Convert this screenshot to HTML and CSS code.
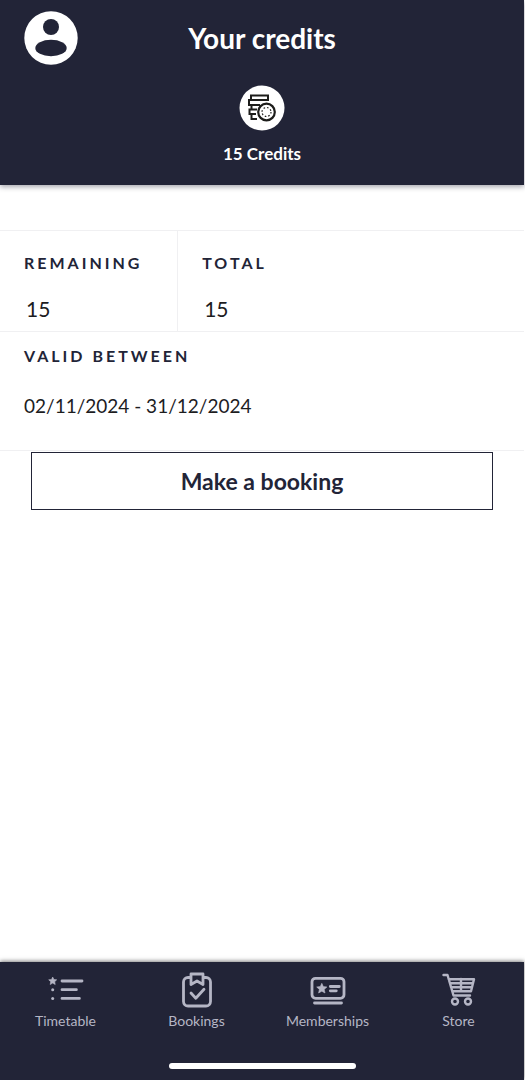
FILE: index.html
```html
<!DOCTYPE html>
<html lang="en">
<head>
<meta charset="utf-8">
<meta name="viewport" content="width=device-width, initial-scale=1">
<title>Your credits</title>
<link rel="stylesheet" href="styles.css">
</head>
<body>
<header class="header">
  <div class="header-bar">
    <button class="avatar" type="button" aria-label="Account">
      <svg viewBox="0 0 54 54" aria-hidden="true">
        <circle cx="27" cy="27" r="26.7" fill="#fff"/>
        <circle cx="27" cy="16" r="8" fill="#222437"/>
        <ellipse cx="27" cy="37" rx="15.7" ry="8.2" fill="#222437"/>
      </svg>
    </button>
    <h1 class="title">Your credits</h1>
  </div>
  <div class="summary">
    <svg class="coins" viewBox="0 0 46 46" aria-hidden="true">
      <circle cx="23" cy="23" r="22.5" fill="#fff"/>
      <g fill="none" stroke="#1d1d1b" stroke-width="2">
        <path d="M12 10.500h17v4.500H12z"/>
        <path d="M21 20H10v-5h2M12.500 20v4.500H18M17 24.500h-6.500V29H17M12.500 29v5H18"/>
        <circle cx="27.500" cy="27" r="8.300" stroke-width="2.200"/>
        <circle cx="27.500" cy="27" r="4.500" stroke-width="1.200" stroke-dasharray="1.600 1.930"/>
      </g>
    </svg>
    <p class="summary-text">15 Credits</p>
  </div>
</header>
<main class="content">
  <dl class="details">
    <div class="cell remaining"><dt>REMAINING</dt><dd class="count">15</dd></div>
    <div class="cell total"><dt>TOTAL</dt><dd class="count">15</dd></div>
    <div class="cell valid"><dt>VALID BETWEEN</dt><dd class="dates">02/11/2024 - 31/12/2024</dd></div>
  </dl>
  <button class="booking" type="button">Make a booking</button>
</main>
<footer class="footer">
  <nav class="tabs" aria-label="Main">
    <a class="tab" href="#timetable">
      <svg class="icon" viewBox="0 0 36 36" aria-hidden="true">
        <path d="M4.700 5l1.200 2.500 2.800.3-2 1.900.5 2.800-2.500-1.400-2.500 1.400.5-2.800-2-1.900 2.800-.3z" fill="currentColor" stroke="currentColor" stroke-width=".6" stroke-linejoin="round"/>
        <path d="M14 9h20M14 17.700h14.400M14 26.400h17.400" fill="none" stroke="currentColor" stroke-width="2.800" stroke-linecap="round"/>
        <circle cx="4.700" cy="17.700" r="1.500" fill="currentColor"/>
        <circle cx="4.700" cy="26.400" r="1.500" fill="currentColor"/>
      </svg>
      <span>Timetable</span>
    </a>
    <a class="tab" href="#bookings">
      <svg class="icon" viewBox="0 0 36 36" aria-hidden="true">
        <g fill="none" stroke="currentColor" stroke-width="2.800" stroke-linejoin="round">
          <path d="M12 5.500H9A4.500 4.500 0 0 0 4.500 10v19.500A4.500 4.500 0 0 0 9 34h18a4.500 4.500 0 0 0 4.500-4.500V10A4.500 4.500 0 0 0 27 5.500h-3"/>
          <path d="M12 2h12v10.500l-6-3.500-6 3.500z"/>
          <path d="M12 21l4.800 5.300 8.200-9" stroke-linecap="round"/>
        </g>
      </svg>
      <span>Bookings</span>
    </a>
    <a class="tab" href="#memberships">
      <svg class="icon" viewBox="0 0 36 36" aria-hidden="true">
        <g fill="none" stroke="currentColor" stroke-width="2.800" stroke-linecap="round">
          <rect x="2" y="6.300" width="32" height="20" rx="3.500"/>
          <path d="M4.500 31h27M20.300 14.500h9M20.300 18.800h6"/>
        </g>
        <path d="M11.800 11.300l1.500 3.300 3.600.4-2.700 2.400.8 3.600-3.200-1.800L8.600 21l.8-3.600L6.700 15l3.600-.4z" fill="currentColor" stroke="currentColor" stroke-width=".6" stroke-linejoin="round"/>
      </svg>
      <span>Memberships</span>
    </a>
    <a class="tab" href="#store">
      <svg class="icon" viewBox="0 0 36 36" aria-hidden="true">
        <g fill="none" stroke="currentColor" stroke-width="2.400" stroke-linejoin="round" stroke-linecap="round">
          <path d="M2.500 3h4l6 20.500H29M7.700 7.200H33l-3 12H11.300M9 11.200h23M10 15.200h21M20 7v12"/>
          <circle cx="14" cy="29.500" r="3"/>
          <circle cx="27" cy="29.500" r="3"/>
        </g>
      </svg>
      <span>Store</span>
    </a>
  </nav>
  <div class="home-indicator"></div>
</footer>
</body>
</html>
```
FILE: styles.css
```css
* { box-sizing: border-box; }

body {
  margin: 0;
  padding-right: 1px;
  min-height: 100vh;
  display: flex;
  flex-direction: column;
  background: #fff;
  color: #222437;
  font-family: Lato, "Open Sans", sans-serif;
}

h1, p, dl, dd { margin: 0; }

button {
  font-family: inherit;
  color: inherit;
  cursor: pointer;
}

.header {
  padding: 11px 24px 20px;
  background: #222437;
  color: #fff;
  box-shadow: 0 2px 5px rgba(34, 36, 55, 0.4);
}

.header-bar {
  display: grid;
  grid-template-columns: 54px 1fr 54px;
  align-items: center;
}

.avatar {
  width: 54px;
  height: 54px;
  padding: 0;
  border: 0;
  background: none;
}

.avatar svg { display: block; }

.title {
  font-size: 28px;
  line-height: 32px;
  font-weight: 700;
  text-align: center;
}

.summary {
  display: flex;
  flex-direction: column;
  align-items: center;
  gap: 12px;
  padding-top: 20px;
}

.coins {
  width: 46px;
  height: 46px;
}

.summary-text {
  font-size: 17px;
  line-height: 22px;
  font-weight: 700;
}

.content { flex: 1; }

.details {
  display: grid;
  grid-template-columns: 34% 1fr;
  margin-top: 45px;
  border-top: 1px solid #f0f0f2;
}

.cell {
  padding: 22px 24px 10px;
  border-bottom: 1px solid #f0f0f2;
}

.remaining {
  padding-right: 0;
  border-right: 1px solid #f0f0f2;
}

.valid {
  grid-column: 1 / -1;
  padding: 14px 24px 32px;
}

dt {
  font-size: 16px;
  line-height: 20px;
  font-weight: 700;
  letter-spacing: 3px;
}

dd { color: #1d1d1f; }

.count {
  padding: 24px 2px 0;
  font-size: 21px;
  line-height: 24px;
}

.dates {
  padding-top: 28px;
  font-size: 19px;
  line-height: 24px;
}

.booking {
  display: block;
  width: calc(100% - 62px);
  height: 58px;
  margin: 1px auto 0;
  border: 1px solid #222437;
  background: #fff;
  font-size: 23px;
  line-height: 28px;
  font-weight: 700;
}

.footer {
  display: flex;
  flex-direction: column;
  align-items: center;
  gap: 33px;
  padding: 10px 0 11px;
  background: #222437;
  box-shadow: 0 -1px 4px rgba(0, 0, 0, 0.5);
}

.tabs {
  display: grid;
  grid-template-columns: repeat(4, 1fr);
  width: 100%;
}

.tab {
  display: flex;
  flex-direction: column;
  align-items: center;
  gap: 4px;
  color: #b5b6c5;
  font-size: 14px;
  line-height: 18px;
  text-decoration: none;
}

.icon {
  width: 36px;
  height: 36px;
}

.home-indicator {
  width: 187px;
  height: 6px;
  border-radius: 3px;
  background: #fff;
}
```
